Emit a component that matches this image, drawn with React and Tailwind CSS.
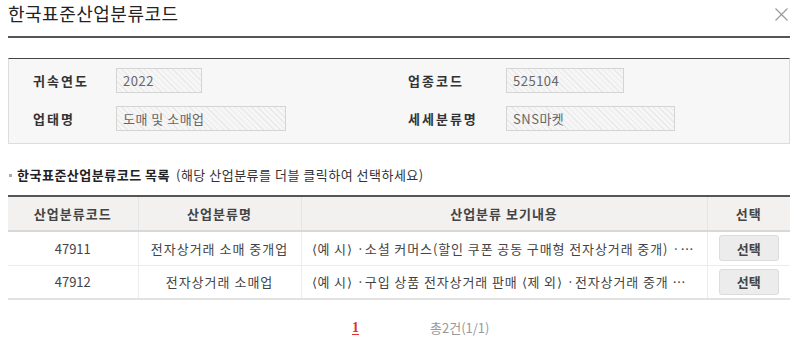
import React from 'react';

const hatch =
  'bg-[repeating-linear-gradient(45deg,#f6f6f6_0px,#f6f6f6_3px,#e9e9e9_3px,#e9e9e9_4px)]';

function Field({ width, children }) {
  return (
    <div
      className={`h-[25px] ${width} border border-[#d4d4d4] ${hatch} pl-[6px] flex items-center text-[13px] text-[#666] tracking-[0.5px]`}
    >
      {children}
    </div>
  );
}

const rows = [
  {
    code: '47911',
    name: '전자상거래 소매 중개업',
    desc: '⟨예 시⟩ ·소셜 커머스(할인 쿠폰 공동 구매형 전자상거래 중개) ·전자상거래 소매 중개',
  },
  {
    code: '47912',
    name: '전자상거래 소매업',
    desc: '⟨예 시⟩ ·구입 상품 전자상거래 판매 ⟨제 외⟩ ·전자상거래 중개 및 판매 대행',
  },
];

export default function App() {
  return (
    <div className="w-[800px] h-[343px] bg-white overflow-hidden font-['Noto_Sans_CJK_KR','Noto_Sans',sans-serif] text-[#333]">
      {/* Header */}
      <div className="flex justify-between items-start pl-2 pr-[12px] pt-[1px] h-[36px]">
        <h1 className="text-[18px] leading-[24px] text-[#222] tracking-[0.5px]">한국표준산업분류코드</h1>
        <svg width="13" height="13" viewBox="0 0 13 13" className="mt-[7px]">
          <path d="M0.5 0.5 L12.5 12.5 M12.5 0.5 L0.5 12.5" stroke="#9a9a9a" strokeWidth="1.2" fill="none" />
        </svg>
      </div>
      <div className="ml-2 mr-[10px] h-[2px] bg-[#555]" />

      <div className="pl-2 pr-[10px]">
        {/* Info box */}
        <div className="mt-[20px] h-[86px] border-t border-t-[#444] border-x border-b border-x-[#ddd] border-b-[#ddd] bg-[#f7f7f7] pt-[9px] flex flex-col gap-[13px]">
          <div className="flex items-center">
            <div className="w-[399px] flex items-center pl-[24px]">
              <span className="w-[83px] text-[13px] font-bold text-[#333] tracking-[2px]">귀속연도</span>
              <Field width="w-[86px]">2022</Field>
            </div>
            <div className="flex items-center">
              <span className="w-[98px] text-[13px] font-bold text-[#333] tracking-[2px]">업종코드</span>
              <Field width="w-[118px]">525104</Field>
            </div>
          </div>
          <div className="flex items-center">
            <div className="w-[399px] flex items-center pl-[24px]">
              <span className="w-[83px] text-[13px] font-bold text-[#333] tracking-[2px]">업태명</span>
              <Field width="w-[170px]">도매 및 소매업</Field>
            </div>
            <div className="flex items-center">
              <span className="w-[98px] text-[13px] font-bold text-[#333] tracking-[2px]">세세분류명</span>
              <Field width="w-[169px]">SNS마켓</Field>
            </div>
          </div>
        </div>

        {/* Section title */}
        <div className="mt-[21px] h-[20px] flex items-center text-[13px]">
          <span className="w-[3px] h-[3px] bg-[#aaa] ml-[1px] mr-[5px]" />
          <span className="font-bold text-[#222] tracking-[0.5px]">한국표준산업분류코드 목록</span>
          <span className="ml-[6px] text-[#333] tracking-[0.5px]">(해당 산업분류를 더블 클릭하여 선택하세요)</span>
        </div>

        {/* Table */}
        <table className="mt-[10px] w-[782px] table-fixed border-collapse text-[13px]">
          <colgroup>
            <col className="w-[130px]" />
            <col className="w-[163px]" />
            <col className="w-[406px]" />
            <col className="w-[83px]" />
          </colgroup>
          <thead>
            <tr className="h-[35px] bg-[#f2f1ef] border-t-2 border-t-[#555] border-b-2 border-b-[#d8d8d8]">
              <th className="font-bold text-[#444] border-r border-r-[#e4e4e4] tracking-[1px]">산업분류코드</th>
              <th className="font-bold text-[#444] border-r border-r-[#e4e4e4] tracking-[1px]">산업분류명</th>
              <th className="font-bold text-[#444] border-r border-r-[#e4e4e4] tracking-[1px]">산업분류 보기내용</th>
              <th className="font-bold text-[#444] tracking-[1px]">선택</th>
            </tr>
          </thead>
          <tbody>
            {rows.map((r, i) => (
              <tr
                key={r.code}
                className={`h-[34px] border-b ${i === rows.length - 1 ? 'border-b-2 border-b-[#e2e2e2]' : 'border-b-[#ececec]'}`}
              >
                <td className="text-center text-[#444] border-r border-r-[#ececec]">{r.code}</td>
                <td className="text-center text-[#444] border-r border-r-[#ececec] tracking-[1px]">{r.name}</td>
                <td className="px-[10px] text-[#444] border-r border-r-[#ececec]">
                  <div className="truncate tracking-[0.9px]">{r.desc}</div>
                </td>
                <td className="text-center">
                  <button className="w-[60px] h-[26px] rounded-[3px] bg-[#ececec] border border-[#dcdcdc] text-[13px] font-bold text-[#444]">
                    선택
                  </button>
                </td>
              </tr>
            ))}
          </tbody>
        </table>

        {/* Pagination */}
        <div className="mt-[17px] flex items-center text-[13px]">
          <span className="ml-[344px] font-['Liberation_Serif',serif] font-bold text-[14px] text-[#d33] underline underline-offset-2">
            1
          </span>
          <span className="ml-[71px] text-[#999]">총2건(1/1)</span>
        </div>
      </div>
    </div>
  );
}
